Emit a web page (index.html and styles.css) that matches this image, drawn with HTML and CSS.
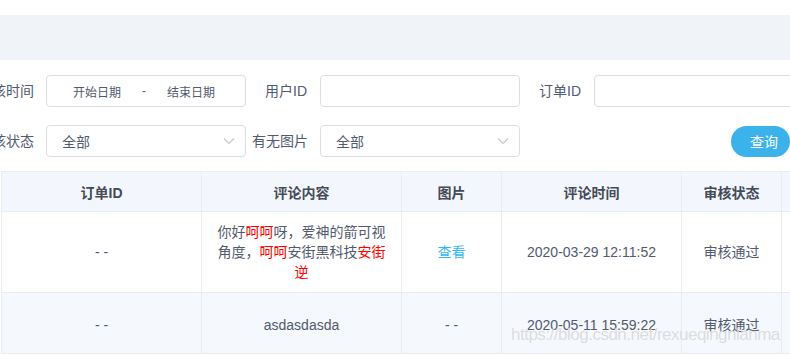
FILE: index.html
```html
<!DOCTYPE html>
<html lang="zh-CN">
  <head>
    <meta charset="UTF-8" />
    <meta name="viewport" content="width=device-width, initial-scale=1.0" />
    <title>评论审核</title>
    <link rel="stylesheet" href="styles.css">
  </head>
  <body>
    <div class="topbar"></div>
    <form class="filters">
      <div class="row">
        <div class="item">
          <label class="label">审核时间</label>
          <div class="input range">
            <span>开始日期</span>
            <span class="sep">-</span>
            <span>结束日期</span>
          </div>
        </div>
        <div class="item">
          <label class="label">用户ID</label>
          <div class="input"></div>
        </div>
        <div class="item">
          <label class="label">订单ID</label>
          <div class="input"></div>
        </div>
      </div>
      <div class="row">
        <div class="item">
          <label class="label">审核状态</label>
          <div class="input select">
            <span>全部</span>
            <svg class="arrow" width="12" height="8" viewBox="0 0 12 8">
              <path d="M1 1.5 L6 6.5 L11 1.5" fill="none" stroke="#c5c8ce" stroke-width="1.2" />
            </svg>
          </div>
        </div>
        <div class="item">
          <label class="label">有无图片</label>
          <div class="input select">
            <span>全部</span>
            <svg class="arrow" width="12" height="8" viewBox="0 0 12 8">
              <path d="M1 1.5 L6 6.5 L11 1.5" fill="none" stroke="#c5c8ce" stroke-width="1.2" />
            </svg>
          </div>
        </div>
        <button type="button" class="btn">查询</button>
      </div>
    </form>
    <div class="table-wrap">
      <table class="grid">
        <colgroup>
          <col style="width:200px" />
          <col style="width:200px" />
          <col style="width:100px" />
          <col style="width:180px" />
          <col style="width:100px" />
          <col style="width:200px" />
        </colgroup>
        <thead>
          <tr>
            <th>订单ID</th>
            <th>评论内容</th>
            <th>图片</th>
            <th>评论时间</th>
            <th>审核状态</th>
            <th></th>
          </tr>
        </thead>
        <tbody>
          <tr>
            <td>- -</td>
            <td class="comment">你好<em>呵呵</em>呀，爱神的箭可视角度，<em>呵呵</em>安街黑科技<em>安街逆</em></td>
            <td><a class="link">查看</a></td>
            <td>2020-03-29 12:11:52</td>
            <td>审核通过</td>
            <td></td>
          </tr>
          <tr class="alt">
            <td>- -</td>
            <td>asdasdasda</td>
            <td>- -</td>
            <td>2020-05-11 15:59:22</td>
            <td>审核通过</td>
            <td></td>
          </tr>
        </tbody>
      </table>
      <div class="watermark">https://blog.csdn.net/rexueqingnianma</div>
    </div>
  </body>
</html>
```

FILE: styles.css
```css
html, body {
  margin: 0;
  padding: 0;
  overflow: hidden;
  background: #fff;
}
body {
  width: 790px;
  height: 355px;
  font-family: "Liberation Sans", "Noto Sans CJK SC", sans-serif;
  font-size: 14px;
  color: #515a6e;
}
.topbar {
  margin-top: 15px;
  height: 45px;
  background-color: #f0f3f8;
}
.filters {
  margin: 15px 0 0 -22px;
}
.row {
  display: flex;
  align-items: center;
  height: 32px;
  margin-bottom: 18px;
}
.row:last-child {
  margin-bottom: 0;
}
.item {
  display: flex;
  align-items: center;
  margin-right: 6px;
}
.label {
  width: 68px;
  box-sizing: border-box;
  padding-right: 13px;
  text-align: right;
  line-height: 32px;
  white-space: nowrap;
}
.input {
  width: 200px;
  height: 32px;
  box-sizing: border-box;
  border: 1px solid #dcdee2;
  border-radius: 4px;
  background: #fff;
}
.range {
  display: flex;
  align-items: center;
  padding: 0 10px;
  font-size: 12px;
  color: #515a6e;
}
.range span {
  width: 80px;
  text-align: center;
}
.range .sep {
  width: 14px;
}
.select {
  display: flex;
  align-items: center;
  justify-content: space-between;
  padding: 0 10px 0 15px;
  color: #515a6e;
}
.arrow {
  display: block;
}
.btn {
  margin-left: 205px;
  width: 66px;
  height: 31px;
  border: none;
  border-radius: 16px;
  background-color: #3bb3ea;
  color: #fff;
  font-family: inherit;
  font-size: 14px;
  text-align: left;
  padding: 0 0 0 19px;
}
.table-wrap {
  position: relative;
  margin: 14px 0 0 1px;
}
.grid {
  border-collapse: collapse;
  table-layout: fixed;
  width: 980px;
  border-top: 1px solid #e8ecf3;
  border-left: 1px solid #e8ecf3;
}
.grid th,
.grid td {
  border-right: 1px solid #e8ecf3;
  border-bottom: 1px solid #e8ecf3;
  text-align: center;
  padding: 0 14px;
}
.grid th {
  height: 39px;
  background-color: #f3f7fd;
  font-weight: bold;
  color: #444a56;
}
.grid td {
  color: #515a6e;
  line-height: 20px;
  padding-top: 10px;
  padding-bottom: 10px;
}
.grid .alt td {
  height: 40px;
  padding-top: 12px;
  padding-bottom: 8px;
  background-color: #f5f8fd;
}
.comment em {
  font-style: normal;
  color: #ff0000;
}
.link {
  color: #2db7f5;
  cursor: pointer;
}
.watermark {
  position: absolute;
  left: 510px;
  top: 154px;
  font-size: 17px;
  letter-spacing: -0.5px;
  color: rgba(190, 190, 190, 0.55);
  text-shadow: 0 0 1px #fff;
  white-space: nowrap;
  pointer-events: none;
}
```
